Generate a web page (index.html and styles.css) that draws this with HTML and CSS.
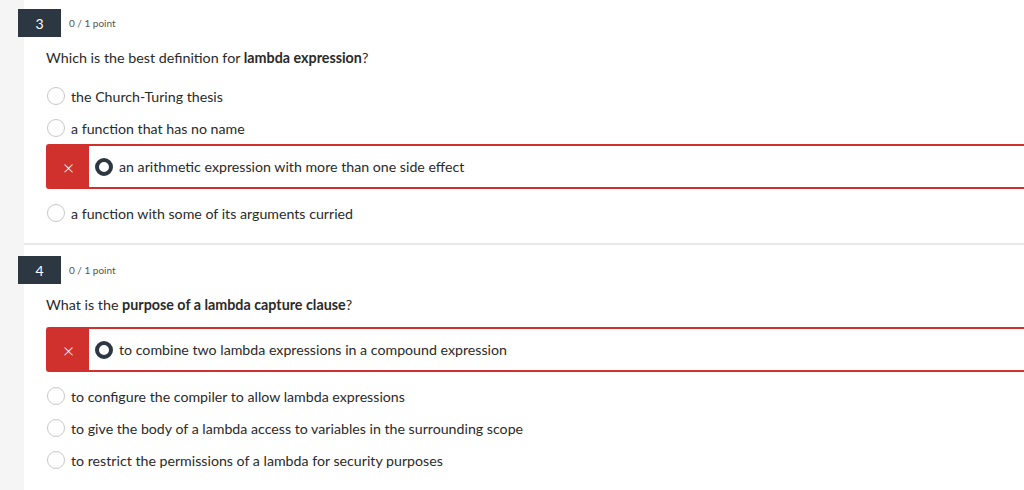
FILE: index.html
```html
<!DOCTYPE html>
<html>
<head>
<meta charset="utf-8">
<link rel="stylesheet" href="styles.css">
</head>
<body>
<div class="page">
  <section class="question q3">
    <div class="head">
      <div class="badge">3</div>
      <div class="points">0 / 1 point</div>
    </div>
    <p class="prompt">Which is the best definition for <b>lambda expression</b>?</p>
    <ul class="options">
      <li class="opt"><span class="radio"></span><span>the Church-Turing thesis</span></li>
      <li class="opt"><span class="radio"></span><span>a function that has no name</span></li>
      <li class="opt wrong"><span class="mark">×</span><span class="radio on"></span><span>an arithmetic expression with more than one side effect</span></li>
      <li class="opt"><span class="radio"></span><span>a function with some of its arguments curried</span></li>
    </ul>
  </section>
  <section class="question q4">
    <div class="head">
      <div class="badge">4</div>
      <div class="points">0 / 1 point</div>
    </div>
    <p class="prompt">What is the <b>purpose of a lambda capture clause</b>?</p>
    <ul class="options">
      <li class="opt wrong"><span class="mark">×</span><span class="radio on"></span><span>to combine two lambda expressions in a compound expression</span></li>
      <li class="opt"><span class="radio"></span><span>to configure the compiler to allow lambda expressions</span></li>
      <li class="opt"><span class="radio"></span><span>to give the body of a lambda access to variables in the surrounding scope</span></li>
      <li class="opt"><span class="radio"></span><span>to restrict the permissions of a lambda for security purposes</span></li>
    </ul>
  </section>
</div>
</body>
</html>
```
FILE: styles.css
```css
html, body {
  margin: 0;
  padding: 0;
  background: #f5f5f5;
  font-family: Lato, "Open Sans", Arial, sans-serif;
  color: #2a2a2a;
}
.page {
  margin-left: 24px;
  background: #fff;
  min-height: 490px;
}
.question {
  padding: 9px 0 14px 0;
}
.q4 {
  border-top: 2px solid #e9e9e9;
  padding-top: 11px;
}
.head {
  display: flex;
  align-items: center;
  margin-left: -6px;
}
.badge {
  width: 43px;
  height: 28px;
  background: #2d3741;
  color: #fff;
  font-size: 14px;
  display: flex;
  align-items: center;
  justify-content: center;
}
.points {
  margin-left: 8px;
  font-size: 10px;
  color: #555;
}
.prompt {
  margin: 0;
  padding: 0 0 0 22px;
  font-size: 14.3px;
  line-height: 20px;
  margin-top: 11px;
  height: 32px;
}
.prompt b {
  font-weight: 700;
}
.options {
  list-style: none;
  margin: 0;
  padding: 0 0 0 22px;
}
.opt {
  display: flex;
  align-items: center;
  height: 32px;
  font-size: 14.2px;
}
.radio {
  width: 18px;
  height: 18px;
  border: 1px solid #c8c8c8;
  border-radius: 50%;
  margin: 0 6px 0 1px;
  box-sizing: border-box;
  flex: none;
}
.radio.on {
  width: 18px;
  height: 18px;
  border: 4px solid #2d3741;
  margin: 0 6px 0 0;
}
.opt.wrong {
  height: 41px;
  border: 2px solid #d0312d;
  border-right: none;
  border-radius: 3px 0 0 3px;
  margin-bottom: 8px;
}
.mark {
  width: 41px;
  height: 41px;
  background: #d0312d;
  color: #fff;
  font-size: 20px;
  font-weight: 300;
  display: flex;
  align-items: center;
  justify-content: center;
  margin-right: 6px;
  flex: none;
}
```
